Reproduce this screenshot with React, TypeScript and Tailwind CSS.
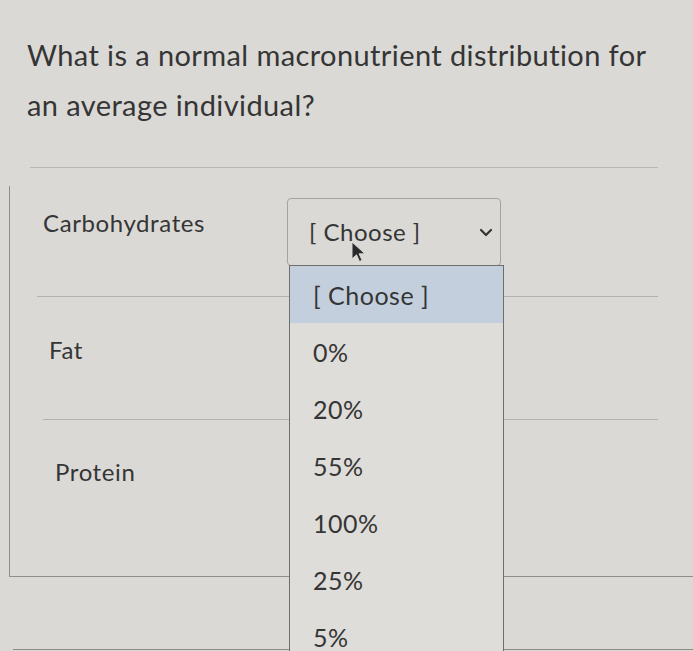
import React from 'react';

const options = ['[ Choose ]', '0%', '20%', '55%', '100%', '25%', '5%'];

const Chevron = () => (
  <svg width="14" height="9" viewBox="0 0 14 9" fill="none">
    <path d="M2 2l5 5 5-5" stroke="#333" strokeWidth="2.2" strokeLinecap="round" strokeLinejoin="round" />
  </svg>
);

const Cursor = () => (
  <svg width="16" height="22" viewBox="0 0 16 22" fill="none">
    <path d="M1 1v17l4.5-4.2 3 6.7 2.6-1.2-3-6.5H14L1 1z" fill="#2a2a2a" stroke="#d8d8d8" strokeWidth="1" />
  </svg>
);

const App = () => {
  return (
    <div className="relative w-[693px] h-[651px] overflow-hidden bg-[#dad9d6] text-[#353535] font-['Lato','Liberation_Sans',sans-serif]">
      <h1 className="pt-[30px] pl-[27px] pr-[10px] text-[29px] leading-[50px] tracking-[0.4px] font-normal">
        What is a normal macronutrient distribution for an average individual?
      </h1>
      <div className="mt-[37px] ml-[30px] mr-[35px] border-t border-[#b9b8b5]" />

      <div className="mt-[18px] ml-[9px] border-l border-b border-[#8e8d8a]">
        <div className="h-[110px] flex items-start">
          <div className="w-[277px] pl-[33px] pt-[22px] text-[24px] leading-[30px] tracking-[0.6px]">Carbohydrates</div>
          <div className="mt-[12px] w-[214px] h-[68px] rounded-[4px] border border-[#a3a29f] flex items-center justify-between pl-[21px] pr-[7px]">
            <span className="text-[24px] leading-[30px] tracking-[0.5px]">[ Choose ]</span>
            <Chevron />
          </div>
        </div>
        <div className="ml-[27px] mr-[35px] border-t border-[#b3b2af]" />
        <div className="h-[122px]">
          <div className="pl-[39px] pt-[38px] text-[24px] leading-[30px] tracking-[0.6px]">Fat</div>
        </div>
        <div className="ml-[33px] mr-[35px] border-t border-[#b3b2af]" />
        <div className="h-[156px]">
          <div className="pl-[45px] pt-[37px] text-[24px] leading-[30px] tracking-[0.6px]">Protein</div>
        </div>
      </div>
      <div className="mt-[72px] ml-[13px] border-t border-[#8e8d8a]" />

      <ul className="absolute left-[289px] top-[265px] w-[215px] h-[420px] bg-[#dedddA] border border-[#6f6e6b]">
        {options.map((o, i) => (
          <li
            key={o}
            className={`h-[57px] flex items-center pl-[23px] text-[25px] leading-[30px] tracking-[0.5px] ${i === 0 ? 'bg-[#c3cfdc]' : ''}`}
          >
            {o}
          </li>
        ))}
      </ul>

      <div className="absolute left-[351px] top-[241px]">
        <Cursor />
      </div>
    </div>
  );
};

export default App;
